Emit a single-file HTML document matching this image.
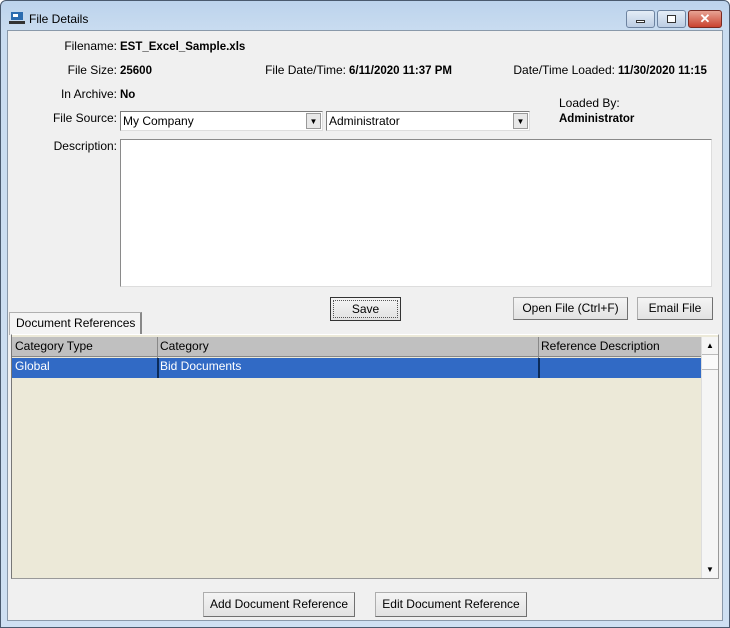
<!DOCTYPE html>
<html><head><style>
*{box-sizing:border-box}
body{margin:0;width:730px;height:628px;overflow:hidden;font-family:"Liberation Sans",Arial,sans-serif;font-size:12px;color:#000;background:#fff}
.frame{position:absolute;left:0;top:0;width:730px;height:628px;background:linear-gradient(#bcd3ec,#c9dcf0 30px,#cfe0f2);border:1px solid #4a5a6e;border-radius:6px 6px 0 0}
.content{position:absolute;left:7px;top:30px;width:716px;height:591px;background:#f0f0f0;border:1px solid #8a99aa}
.a{position:absolute;white-space:nowrap}
.r{text-align:right}
b{font-weight:bold;font-size:11.5px}
.btn{position:absolute;background:linear-gradient(#f4f4f4,#e2e2e2);border:1px solid #adadad;border-right-color:#707070;border-bottom-color:#707070;text-align:center;line-height:20px}
.combo{position:absolute;height:20px;background:#fff;border:1px solid #7a7a7a;border-right-color:#ddd;border-bottom-color:#ddd;padding-left:2px;line-height:18px}
.dd{position:absolute;right:1px;top:1px;width:15px;height:16px;background:#e8e8e8;border:1px solid #999;font-size:8px;text-align:center;line-height:15px}
</style></head><body>
<div class="frame">
<div class="a" style="left:8px;top:10px;width:16px;height:14px">
<svg width="16" height="14"><rect x="2" y="1" width="12" height="8" fill="#2b6cb0"/><rect x="4" y="3" width="5" height="3" fill="#fff"/><rect x="0" y="10" width="16" height="3" fill="#333"/></svg></div>
<div class="a" style="left:28px;top:11px;font-size:12px">File Details</div>
<div class="a" style="left:625px;top:9px;width:29px;height:18px;border:1px solid #6d83a0;border-radius:3px;background:linear-gradient(#e4edf7,#bccde3)"><div style="position:absolute;left:9px;top:9px;width:9px;height:3px;border:1px solid #333;background:#fff"></div></div>
<div class="a" style="left:656px;top:9px;width:29px;height:18px;border:1px solid #6d83a0;border-radius:3px;background:linear-gradient(#e4edf7,#bccde3)"><div style="position:absolute;left:9px;top:4px;width:9px;height:8px;border:1px solid #333;background:#fff"></div></div>
<div class="a" style="left:687px;top:9px;width:34px;height:18px;border:1px solid #7a2a22;border-radius:3px;background:linear-gradient(#e8a394,#c9422f);color:#fff;font-weight:bold;text-align:center;line-height:15px;font-size:13px">✕</div>
</div>
<div class="content"></div>

<div class="a r" style="left:20px;width:97px;top:39px">Filename:</div><div class="a" style="left:120px;top:39px"><b>EST_Excel_Sample.xls</b></div>
<div class="a r" style="left:20px;width:97px;top:63px">File Size:</div><div class="a" style="left:120px;top:63px"><b>25600</b></div>
<div class="a r" style="left:200px;width:146px;top:63px">File Date/Time:</div><div class="a" style="left:349px;top:63px"><b>6/11/2020 11:37 PM</b></div>
<div class="a r" style="left:450px;width:165px;top:63px">Date/Time Loaded:</div><div class="a" style="left:618px;top:63px"><b>11/30/2020 11:15</b></div>
<div class="a r" style="left:20px;width:97px;top:87px">In Archive:</div><div class="a" style="left:120px;top:87px"><b>No</b></div>
<div class="a r" style="left:20px;width:97px;top:111px">File Source:</div>
<div class="combo" style="left:120px;top:111px;width:203px">My Company<div class="dd">▼</div></div>
<div class="combo" style="left:326px;top:111px;width:204px">Administrator<div class="dd">▼</div></div>
<div class="a" style="left:559px;top:96px">Loaded By:</div><div class="a" style="left:559px;top:111px"><b>Administrator</b></div>
<div class="a r" style="left:20px;width:97px;top:139px">Description:</div>
<div class="a" style="left:120px;top:139px;width:592px;height:148px;background:#fff;border:1px solid #8a8a8a;border-right-color:#ddd;border-bottom-color:#ddd"></div>

<div class="btn" style="left:330px;top:297px;width:71px;height:24px;border:1px solid #333"><div style="border:1px dotted #555;margin:2px;line-height:16px">Save</div></div>
<div class="btn" style="left:513px;top:297px;width:115px;height:23px">Open File (Ctrl+F)</div>
<div class="btn" style="left:637px;top:297px;width:76px;height:23px">Email File</div>

<div class="a" style="left:9px;top:312px;width:133px;height:23px;background:#f4f4f4;border:1px solid #b0b0b0;border-bottom:none;border-right:2px solid #888;padding:3px 0 0 6px">Document References</div>
<div class="a" style="left:11px;top:334px;width:708px;height:245px;background:#ece9d8;border:1px solid #999;border-top-color:#fff;border-left-color:#777">
 <div style="position:absolute;left:0;top:2px;width:689px;height:20px;background:#c0c0c0;border-bottom:1px solid #888"></div>
 <div class="a" style="left:3px;top:4px">Category Type</div>
 <div class="a" style="left:145px;top:2px;width:1px;height:41px;background:#888"></div>
 <div class="a" style="left:148px;top:4px">Category</div>
 <div class="a" style="left:526px;top:2px;width:1px;height:41px;background:#888"></div>
 <div class="a" style="left:529px;top:4px">Reference Description</div>
 <div style="position:absolute;left:0;top:23px;width:689px;height:20px;background:#316ac5"></div>
 <div class="a" style="left:145px;top:23px;width:2px;height:20px;background:#0b2b5a"></div>
 <div class="a" style="left:526px;top:23px;width:2px;height:20px;background:#0b2b5a"></div>
 <div class="a" style="left:3px;top:24px;color:#fff">Global</div>
 <div class="a" style="left:148px;top:24px;color:#fff">Bid Documents</div>
 <div class="a" style="left:689px;top:2px;width:17px;height:241px;background:#f5f5f5;border-left:1px solid #ddd">
  <div style="height:17px;text-align:center;font-size:8px;line-height:17px">▲</div>
  <div style="height:16px;background:#fafafa;border-top:1px solid #bbb;border-bottom:1px solid #bbb"></div>
  <div style="position:absolute;bottom:0;width:16px;height:17px;text-align:center;font-size:8px;line-height:17px">▼</div>
 </div>
</div>
<div class="btn" style="left:203px;top:592px;width:152px;height:25px;line-height:23px">Add Document Reference</div>
<div class="btn" style="left:375px;top:592px;width:152px;height:25px;line-height:23px">Edit Document Reference</div>
</body></html>
